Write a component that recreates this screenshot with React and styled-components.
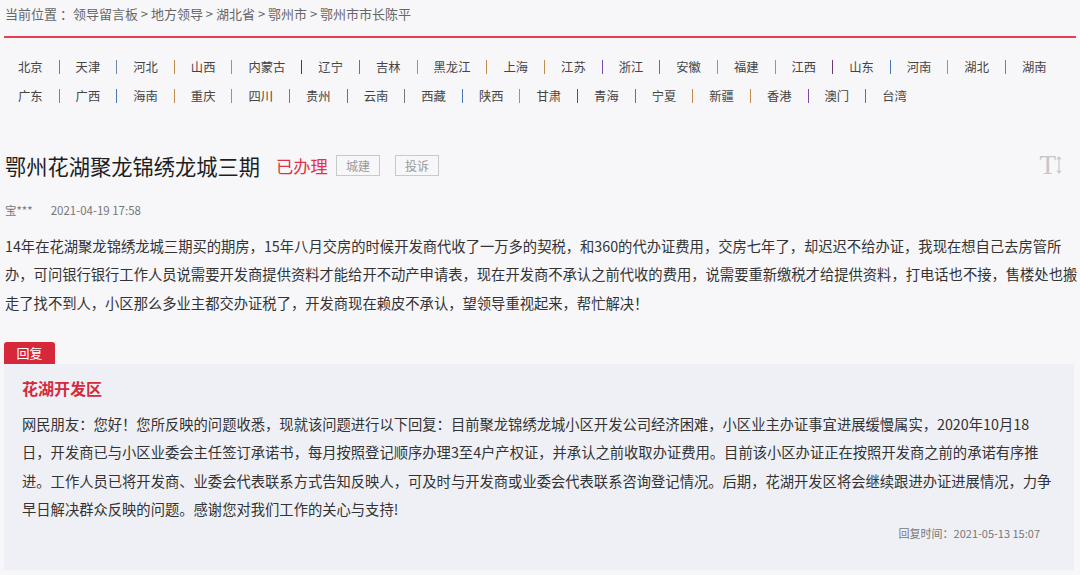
import React from "react";
import styled, { createGlobalStyle } from "styled-components";

const GlobalStyle = createGlobalStyle`
  body {
    margin: 0;
    background: #f7f6f9;
    font-family: "Noto Sans CJK SC", "Noto Sans", sans-serif;
    color: #333;
  }
`;

const Page = styled.div`
  width: 1080px;
  height: 575px;
  overflow: hidden;
  padding-left: 4px;
  box-sizing: border-box;
`;

const Crumbs = styled.div`
  margin-right: 4px;
  height: 36px;
  line-height: 28px;
  padding-left: 1px;
  font-size: 13px;
  color: #666;
  border-bottom: 2px solid #e0434f;
`;

const Nav = styled.div`
  padding: 14px 0 0 14px;
`;

const NavRow = styled.div`
  display: flex;
  align-items: center;
  height: 29px;
  font-size: 12.3px;
  color: #444;
`;

const Sep = styled.span`
  display: inline-block;
  width: 1px;
  height: 14px;
  margin: 0 16px;
  background: ${(p) => p.$c};
`;

const TitleRow = styled.div`
  display: flex;
  align-items: center;
  height: 36px;
  margin-top: 37px;
  padding-left: 1px;
`;

const Title = styled.h1`
  margin: 0;
  font-size: 21.25px;
  font-weight: normal;
  color: #1e1e1e;
`;

const Status = styled.span`
  margin-left: 16px;
  font-size: 17.3px;
  color: #e03444;
`;

const Tag = styled.span`
  display: inline-block;
  height: 19px;
  line-height: 19px;
  padding: 0 9px;
  margin-left: ${(p) => p.$gap}px;
  border: 1px solid #c9c9c9;
  font-size: 12px;
  color: #9a9a9a;
`;

const FontSize = styled.div`
  display: flex;
  align-items: center;
  margin-left: auto;
  margin-right: 18px;
  color: #c6c6c6;
  font-family: "Liberation Serif", serif;
  font-size: 27px;
  line-height: 1;
`;

const Meta = styled.div`
  display: flex;
  gap: 18px;
  margin-top: 17px;
  padding-left: 1px;
  line-height: 20px;
  font-size: 11.5px;
  color: #777;
`;

const Question = styled.p`
  margin: 12px 0 0;
  padding-left: 1px;
  width: 1075px;
  font-size: 14.3px;
  line-height: 28.3px;
  color: #333;
`;

const ReplyTab = styled.div`
  width: 51px;
  height: 22px;
  margin-top: 25px;
  line-height: 22px;
  text-align: center;
  border-radius: 3px 3px 0 0;
  background: #d7283b;
  color: #fff;
  font-size: 13px;
`;

const ReplyBox = styled.div`
  margin-right: 6px;
  padding: 12px 19px 29px 18px;
  background: #eff0f5;
`;

const Dept = styled.div`
  line-height: 24px;
  font-size: 16px;
  font-weight: bold;
  color: #d32a3c;
`;

const ReplyText = styled.p`
  margin: 10px 0 0;
  font-size: 14.3px;
  line-height: 28.5px;
  color: #333;
`;

const ReplyTime = styled.div`
  margin-top: 1px;
  padding-right: 15px;
  text-align: right;
  line-height: 16px;
  font-size: 11px;
  color: #777;
`;

const rows = [
  [
    ["北京", "#8a6aa8"], ["天津", "#6f8aa8"], ["河北", "#c0894e"], ["山西", "#c0894e"],
    ["内蒙古", "#3a3f6a"], ["辽宁", "#4a78b0"], ["吉林", "#c0894e"], ["黑龙江", "#c0894e"],
    ["上海", "#c0894e"], ["江苏", "#7a4aa8"], ["浙江", "#4a78b0"], ["安徽", "#c0894e"],
    ["福建", "#c0894e"], ["江西", "#6a3a70"], ["山东", "#4a78b0"], ["河南", "#c0894e"],
    ["湖北", "#a0784e"], ["湖南"],
  ],
  [
    ["广东", "#8a7aa0"], ["广西", "#4a78b0"], ["海南", "#c0894e"], ["重庆", "#c0894e"],
    ["四川", "#8a6aa8"], ["贵州", "#4a78b0"], ["云南", "#777"], ["西藏", "#4a78b0"],
    ["陕西", "#c0894e"], ["甘肃", "#555"], ["青海", "#4a78b0"], ["宁夏", "#c0894e"],
    ["新疆", "#c0894e"], ["香港", "#7a4aa8"], ["澳门", "#4a78b0"], ["台湾"],
  ],
];

function SizeIcon() {
  return (
    <FontSize>
      T
      <svg width="6" height="18" viewBox="0 0 6 18">
        <path d="M3 1v16M1 3.5L3 1l2 2.5M1 14.5L3 17l2-2.5" stroke="#c6c6c6" strokeWidth="1.2" fill="none" />
      </svg>
    </FontSize>
  );
}

export default function App() {
  return (
    <Page>
      <GlobalStyle />
      <Crumbs>当前位置 ：领导留言板 &gt; 地方领导 &gt; 湖北省 &gt; 鄂州市 &gt; 鄂州市市长陈平</Crumbs>
      <Nav>
        {rows.map((row, i) => (
          <NavRow key={i}>
            {row.map(([name, c]) => (
              <React.Fragment key={name}>
                <span>{name}</span>
                {c && <Sep $c={c} />}
              </React.Fragment>
            ))}
          </NavRow>
        ))}
      </Nav>
      <TitleRow>
        <Title>鄂州花湖聚龙锦绣龙城三期</Title>
        <Status>已办理</Status>
        <Tag $gap={8}>城建</Tag>
        <Tag $gap={15}>投诉</Tag>
        <SizeIcon />
      </TitleRow>
      <Meta>
        <span>宝***</span>
        <span>2021-04-19 17:58</span>
      </Meta>
      <Question>
        14年在花湖聚龙锦绣龙城三期买的期房，15年八月交房的时候开发商代收了一万多的契税，和360的代办证费用，交房七年了，却迟迟不给办证，我现在想自己去房管所办，可问银行银行工作人员说需要开发商提供资料才能给开不动产申请表，现在开发商不承认之前代收的费用，说需要重新缴税才给提供资料，打电话也不接，售楼处也搬走了找不到人，小区那么多业主都交办证税了，开发商现在赖皮不承认，望领导重视起来，帮忙解决！
      </Question>
      <ReplyTab>回复</ReplyTab>
      <ReplyBox>
        <Dept>花湖开发区</Dept>
        <ReplyText>
          网民朋友：您好！您所反映的问题收悉，现就该问题进行以下回复：目前聚龙锦绣龙城小区开发公司经济困难，小区业主办证事宜进展缓慢属实，2020年10月18日，开发商已与小区业委会主任签订承诺书，每月按照登记顺序办理3至4户产权证，并承认之前收取办证费用。目前该小区办证正在按照开发商之前的承诺有序推进。工作人员已将开发商、业委会代表联系方式告知反映人，可及时与开发商或业委会代表联系咨询登记情况。后期，花湖开发区将会继续跟进办证进展情况，力争早日解决群众反映的问题。感谢您对我们工作的关心与支持!
        </ReplyText>
        <ReplyTime>回复时间：2021-05-13 15:07</ReplyTime>
      </ReplyBox>
    </Page>
  );
}
